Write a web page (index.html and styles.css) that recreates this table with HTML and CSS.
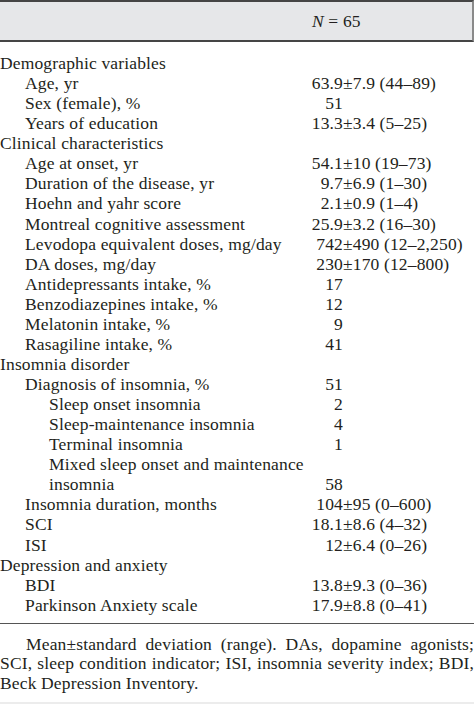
FILE: index.html
```html
<!DOCTYPE html>
<html>
<head>
<meta charset="utf-8">
<link rel="stylesheet" href="styles.css">
</head>
<body>
<div class="page">
  <div class="head"><span class="hn"><i>N</i> = 65</span></div>
  <div class="rows">
    <div class="row"><div class="lab l0">Demographic variables</div><div class="val"></div></div>
    <div class="row"><div class="lab l1">Age, yr</div><div class="val"><span class="a">63.9</span><span class="b">±7.9 (44–89)</span></div></div>
    <div class="row"><div class="lab l1">Sex (female), %</div><div class="val"><span class="a">51</span></div></div>
    <div class="row"><div class="lab l1">Years of education</div><div class="val"><span class="a">13.3</span><span class="b">±3.4 (5–25)</span></div></div>
    <div class="row"><div class="lab l0">Clinical characteristics</div><div class="val"></div></div>
    <div class="row"><div class="lab l1">Age at onset, yr</div><div class="val"><span class="a">54.1</span><span class="b">±10 (19–73)</span></div></div>
    <div class="row"><div class="lab l1">Duration of the disease, yr</div><div class="val"><span class="a">9.7</span><span class="b">±6.9 (1–30)</span></div></div>
    <div class="row"><div class="lab l1">Hoehn and yahr score</div><div class="val"><span class="a">2.1</span><span class="b">±0.9 (1–4)</span></div></div>
    <div class="row"><div class="lab l1">Montreal cognitive assessment</div><div class="val"><span class="a">25.9</span><span class="b">±3.2 (16–30)</span></div></div>
    <div class="row"><div class="lab l1">Levodopa equivalent doses, mg/day</div><div class="val"><span class="a">742</span><span class="b">±490 (12–2,250)</span></div></div>
    <div class="row"><div class="lab l1">DA doses, mg/day</div><div class="val"><span class="a">230</span><span class="b">±170 (12–800)</span></div></div>
    <div class="row"><div class="lab l1">Antidepressants intake, %</div><div class="val"><span class="a">17</span></div></div>
    <div class="row"><div class="lab l1">Benzodiazepines intake, %</div><div class="val"><span class="a">12</span></div></div>
    <div class="row"><div class="lab l1">Melatonin intake, %</div><div class="val"><span class="a">9</span></div></div>
    <div class="row"><div class="lab l1">Rasagiline intake, %</div><div class="val"><span class="a">41</span></div></div>
    <div class="row"><div class="lab l0">Insomnia disorder</div><div class="val"></div></div>
    <div class="row"><div class="lab l1">Diagnosis of insomnia, %</div><div class="val"><span class="a">51</span></div></div>
    <div class="row"><div class="lab l2">Sleep onset insomnia</div><div class="val"><span class="a">2</span></div></div>
    <div class="row"><div class="lab l2">Sleep-maintenance insomnia</div><div class="val"><span class="a">4</span></div></div>
    <div class="row"><div class="lab l2">Terminal insomnia</div><div class="val"><span class="a">1</span></div></div>
    <div class="row"><div class="lab l2">Mixed sleep onset and maintenance</div><div class="val"></div></div>
    <div class="row"><div class="lab l2">insomnia</div><div class="val"><span class="a">58</span></div></div>
    <div class="row"><div class="lab l1">Insomnia duration, months</div><div class="val"><span class="a">104</span><span class="b">±95 (0–600)</span></div></div>
    <div class="row"><div class="lab l1">SCI</div><div class="val"><span class="a">18.1</span><span class="b">±8.6 (4–32)</span></div></div>
    <div class="row"><div class="lab l1">ISI</div><div class="val"><span class="a">12</span><span class="b">±6.4 (0–26)</span></div></div>
    <div class="row"><div class="lab l0">Depression and anxiety</div><div class="val"></div></div>
    <div class="row"><div class="lab l1">BDI</div><div class="val"><span class="a">13.8</span><span class="b">±9.3 (0–36)</span></div></div>
    <div class="row"><div class="lab l1">Parkinson Anxiety scale</div><div class="val"><span class="a">17.9</span><span class="b">±8.8 (0–41)</span></div></div>
  </div>
  <div class="foot">
    <p class="note"><span class="ln first">Mean±standard deviation (range). DAs, dopamine agonists;</span> <span class="ln">SCI, sleep condition indicator; ISI, insomnia severity index; BDI,</span> <span class="ln last">Beck Depression Inventory.</span></p>
  </div>
  <div class="edge"></div>
</div>
</body>
</html>
```

FILE: styles.css
```css
html, body {
  margin: 0;
  padding: 0;
  background: #ffffff;
}

.page {
  width: 474px;
  height: 704px;
  overflow: hidden;
  font-family: "Liberation Serif", "Times New Roman", serif;
  font-size: 17.5px;
  letter-spacing: 0.15px;
  color: #231f20;
  display: flex;
  flex-direction: column;
}

.head {
  height: 38px;
  line-height: 38px;
  background: #e6e7e9;
  border-top: 2px solid #454545;
  border-bottom: 2px solid #454545;
  border-right: 2px solid #8a8a8a;
  padding-left: 312px;
}

.rows {
  padding: 11px 0 8px;
  border-bottom: 1px solid #555555;
}

.row {
  display: grid;
  grid-template-columns: 300px 1fr;
  height: 20.07px;
  line-height: 20px;
  white-space: nowrap;
}

.lab {
  overflow: visible;
}

.l0 { padding-left: 0; }
.l1 { padding-left: 25px; }
.l2 { padding-left: 49px; }

.val {
  display: flex;
}

.a {
  width: 43px;
  text-align: right;
}

.foot {
  flex: 1;
  padding-top: 11px;
}

.note {
  margin: 0;
  line-height: 19.5px;
}

.ln {
  display: block;
  white-space: nowrap;
  text-align: justify;
  text-align-last: justify;
}

.ln.first {
  padding-left: 26px;
}

.ln.last {
  text-align-last: left;
}

.edge {
  height: 2px;
  background: #ececec;
}
```
